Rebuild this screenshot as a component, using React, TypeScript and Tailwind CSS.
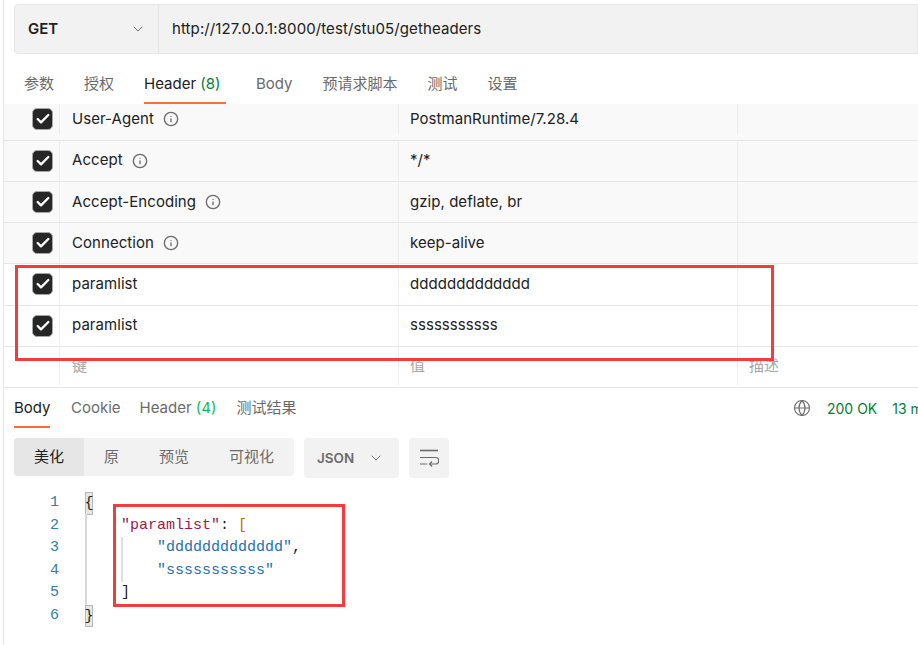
import React from "react";
import { ChevronDown, Check, Info, Globe } from "lucide-react";

const rows = [
  { key: "User-Agent", value: "PostmanRuntime/7.28.4", info: true, h: "h-[37px] pb-[6px]" },
  { key: "Accept", value: "*/*", info: true, h: "h-[41px] pb-[1px]" },
  { key: "Accept-Encoding", value: "gzip, deflate, br", info: true, h: "h-[41px]" },
  { key: "Connection", value: "keep-alive", info: true, h: "h-[41px]" },
  { key: "paramlist", value: "ddddddddddddd", info: false, h: "h-[42px] pb-[1px]" },
  { key: "paramlist", value: "sssssssssss", info: false, h: "h-[41px] pb-[1px]" },
];

const reqTabs = ["参数", "授权", "Header", "Body", "预请求脚本", "测试", "设置"];

const App = () => {
  return (
    <div className="relative w-[918px] h-[645px] overflow-hidden bg-white text-[15px] text-[#212121] font-['Inter','Noto_Sans_CJK_SC',sans-serif]">
      <div className="ml-[3px] h-full border-l border-[#e6e6e6] flex flex-col">
        {/* URL bar */}
        <div className="pt-[4px] pl-[10px] h-[66px]">
          <div className="flex h-[50px] bg-[#f2f2f2] border border-[#e6e6e6] rounded-l-[4px]">
            <div className="w-[144px] flex items-center justify-between pl-[13px] pr-[12px] border-r border-[#e6e6e6]">
              <span className="font-semibold text-[#212121] pt-[1px]">GET</span>
              <ChevronDown size={16} strokeWidth={1.5} className="text-[#6b6b6b]" />
            </div>
            <div className="flex items-center pl-[13px] pt-[1px] tracking-[0.1px]">
              http://127.0.0.1:8000/test/stu05/getheaders
            </div>
          </div>
        </div>

        {/* Request tabs */}
        <div className="flex h-[38px] pl-[20px] gap-[30px] text-[#6b6b6b]">
          {reqTabs.map((t) =>
            t === "Header" ? (
              <div key={t} className="w-[82px] flex pt-[7px] border-b-2 border-[#ff6c37] text-[#212121]">
                Header&nbsp;<span className="text-[#007f31]">(8)</span>
              </div>
            ) : (
              <div key={t} className="pt-[7px]">{t}</div>
            )
          )}
        </div>

        {/* Header table */}
        <div className="flex flex-col tracking-[0.05px]">
          {rows.map((r, i) => (
            <div
              key={i}
              className={`flex ${r.h} border-b border-[#e6e6e6] ${r.info ? "bg-[#f9f9f9]" : "bg-white"}`}
            >
              <div className="w-[56px] flex items-center justify-end pr-[6px] border-r border-[#ededed]">
                <div className="w-[21px] h-[22px] rounded-[5px] bg-[#262626] border border-[#a6a6a6] flex items-center justify-center">
                  <Check size={16} strokeWidth={3.5} className="text-white" />
                </div>
              </div>
              <div className="w-[339px] flex items-center gap-[9px] pl-[12px] border-r border-[#ededed]">
                <span>{r.key}</span>
                {r.info && <Info size={16} className="text-[#6b6b6b]" />}
              </div>
              <div className="w-[339px] flex items-center pl-[11px] border-r border-[#ededed]">{r.value}</div>
              <div className="flex-1" />
            </div>
          ))}
          <div className="flex h-[41px] pb-[2px] border-b border-[#e6e6e6] text-[#a6a6a6]">
            <div className="w-[56px] border-r border-[#ededed]" />
            <div className="w-[339px] flex items-center pl-[12px] border-r border-[#ededed]">键</div>
            <div className="w-[339px] flex items-center pl-[11px] border-r border-[#ededed]">值</div>
            <div className="flex-1 flex items-center pl-[11px]">描述</div>
          </div>
        </div>

        {/* Response tabs */}
        <div className="flex h-[40px] pl-[10px] items-stretch text-[#6b6b6b]">
          <div className="w-[36px] flex pt-[9px] border-b-2 border-[#ff6c37] text-[#212121]">Body</div>
          <div className="ml-[21px] pt-[9px]">Cookie</div>
          <div className="ml-[19px] pt-[9px]">
            Header <span className="text-[#0cbb52]">(4)</span>
          </div>
          <div className="ml-[20px] pt-[9px]">测试结果</div>
          <div className="ml-auto flex items-start pt-[10px] whitespace-nowrap w-[125px] overflow-hidden text-[14px]">
            <Globe size={18} className="text-[#6b6b6b] mt-[1px] shrink-0" strokeWidth={1.5} />
            <span className="ml-[16px] text-[#007f31]">200 OK</span>
            <span className="ml-[15px] text-[#007f31]">13 ms</span>
          </div>
        </div>

        {/* Response toolbar */}
        <div className="flex pl-[10px] pt-[10px] gap-[10px]">
          <div className="flex w-[280px] h-[38px] bg-[#f2f2f2] rounded-[4px] text-[#6b6b6b] overflow-hidden">
            <div className="w-[70px] bg-[#e6e6e6] text-[#212121] flex items-center justify-center">美化</div>
            <div className="w-[55px] flex items-center justify-center">原</div>
            <div className="w-[70px] flex items-center justify-center">预览</div>
            <div className="flex-1 flex items-center justify-center">可视化</div>
          </div>
          <div className="w-[95px] h-[40px] bg-[#f2f2f2] rounded-[4px] flex items-center pl-[13px] gap-[14px] text-[#6b6b6b] font-semibold text-[13.5px]">
            JSON
            <ChevronDown size={16} strokeWidth={1.5} />
          </div>
          <div className="w-[40px] h-[40px] bg-[#f2f2f2] rounded-[4px] flex items-center justify-center">
            <svg width="20" height="20" viewBox="0 0 20 20" fill="none" stroke="#6b6b6b" strokeWidth="1.2">
              <path d="M1 2.5h18" strokeWidth="1.6" />
              <path d="M1 9.5h15.5a2.7 2.7 0 0 1 0 6.5H11M1 16h7" />
              <path d="M13 13.5l-2.5 2.5 2.5 2.5" />
            </svg>
          </div>
        </div>

        {/* Code */}
        <div className="flex mt-[14px] font-['Liberation_Mono',monospace] text-[15px] leading-[22.5px]">
          <div className="w-[55px] text-right text-[#2b83a3]">
            {[1, 2, 3, 4, 5, 6].map((n) => (
              <div key={n}>{n}</div>
            ))}
          </div>
          <div className="relative ml-[26px] whitespace-pre">
            <div className="absolute left-[0px] top-[22px] h-[91px] border-l-2 border-[#d9d9d9]" />
            <div className="absolute left-[36px] top-[45px] h-[45px] border-l-2 border-[#e0e0e0]" />
            <div className="w-[8px] h-[22.5px] bg-[#e3e9e2] border border-[#b9b9b9] flex justify-center">{"{"}</div>
            <div className="pl-[36px]">
              <span className="text-[#a3154a]">"paramlist"</span>: <span className="text-[#b8760b]">[</span>
            </div>
            <div className="pl-[72px] text-[#1f6fb5]">
              "ddddddddddddd"<span className="text-[#212121]">,</span>
            </div>
            <div className="pl-[72px] text-[#1f6fb5]">"sssssssssss"</div>
            <div className="pl-[36px]">]</div>
            <div className="w-[8px] h-[22.5px] bg-[#e3e9e2] border border-[#b9b9b9] flex justify-center">{"}"}</div>
          </div>
        </div>
      </div>

      {/* Red annotation boxes */}
      <div className="absolute left-[15px] top-[265px] w-[759px] h-[96px] border-[3px] border-[#f53c3c]" />
      <div className="absolute left-[113px] top-[504px] w-[232px] h-[103px] border-[3px] border-[#f53c3c]" />
    </div>
  );
};

export default App;
